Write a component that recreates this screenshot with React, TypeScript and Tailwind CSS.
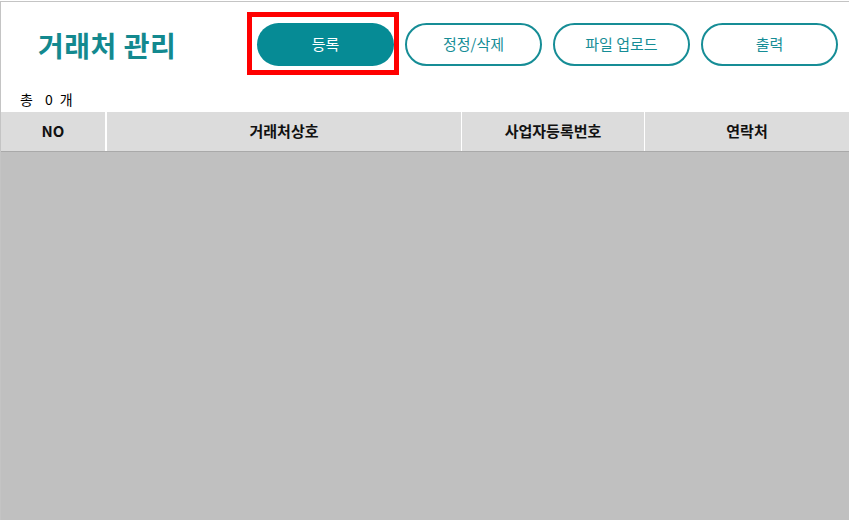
function ActionButton({ label, filled }: { label: string; filled?: boolean }) {
  return (
    <button
      className={`w-[137px] h-[43px] rounded-full text-[15px] ${
        filled
          ? "bg-[#068b95] text-white"
          : "border-2 border-[#168d96] bg-white text-[#168d96]"
      }`}
    >
      {label}
    </button>
  );
}

export default function App() {
  return (
    <div
      className="w-[849px] h-[520px] overflow-hidden bg-white flex flex-col"
      style={{ fontFamily: '"Noto Sans CJK KR", "Liberation Sans", sans-serif' }}
    >
      <div className="mt-px flex-1 flex flex-col border-t border-l border-[#c4c4c4]">
        {/* Top bar */}
        <div className="h-[85px] flex items-center">
          <div className="w-[256px] pl-[37px]">
            <h1 className="text-[28px] font-bold text-[#13898f] leading-none tracking-[0.5px]">
              거래처 관리
            </h1>
          </div>
          <div className="flex items-center gap-[11px]">
            <div className="relative">
              <ActionButton label="등록" filled />
              {/* highlight */}
              <span className="absolute -left-[10px] -right-[5px] -top-[11px] -bottom-[9px] border-[5px] border-[#ff0000] pointer-events-none" />
            </div>
            <ActionButton label="정정/삭제" />
            <ActionButton label="파일 업로드" />
            <ActionButton label="출력" />
          </div>
        </div>

        {/* Count */}
        <div className="h-[25px] flex items-center pl-[19px] text-[14px] text-black">
          <span>총</span>
          <span className="ml-[12px]">0</span>
          <span className="ml-[7px]">개</span>
        </div>

        {/* Table header */}
        <div className="h-[40px] flex bg-[#dcdcdc] border-b border-[#a9a9a9] text-[15px] font-bold text-[#111]">
          <div className="w-[104px] flex items-center justify-center">NO</div>
          <div className="w-[356px] flex items-center justify-center border-l-2 border-white">
            거래처상호
          </div>
          <div className="w-[183px] flex items-center justify-center border-l border-white">
            사업자등록번호
          </div>
          <div className="flex-1 flex items-center justify-center border-l border-white">
            연락처
          </div>
        </div>

        {/* Body */}
        <div className="flex-1 bg-[#c0c0c0]" />
      </div>
    </div>
  );
}
